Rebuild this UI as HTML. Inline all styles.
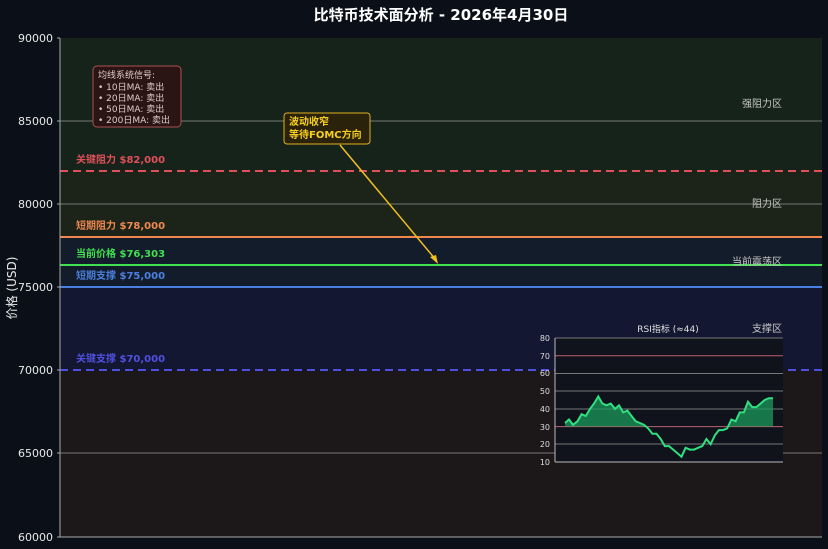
<!DOCTYPE html>
<html><head><meta charset="utf-8"><style>
html,body{margin:0;padding:0;background:#0b0f17;}
svg{display:block;font-family:"DejaVu Sans","Noto Sans CJK SC",sans-serif;}
</style></head><body>
<svg width="828" height="549" viewBox="0 0 828 549" xmlns="http://www.w3.org/2000/svg">
<rect width="828" height="549" fill="#0b0f17"/>
<text x="441" y="20" text-anchor="middle" fill="#ffffff" font-size="15" font-weight="bold">比特币技术面分析 - 2026年4月30日</text>
<rect x="60" y="38" width="762" height="133" fill="#15231a"/>
<rect x="60" y="171" width="762" height="66" fill="#1c2419"/>
<rect x="60" y="237" width="762" height="50" fill="#131c2a"/>
<rect x="60" y="287" width="762" height="83" fill="#131731"/>
<rect x="60" y="370" width="762" height="167" fill="#1c1719"/>
<g stroke="#8a8f8a" stroke-width="1" opacity="0.8">
<line x1="60" y1="121" x2="822" y2="121"/>
<line x1="60" y1="204" x2="822" y2="204"/>
<line x1="60" y1="453" x2="822" y2="453"/>
</g>
<line x1="60" y1="171" x2="822" y2="171" stroke="#e0505a" stroke-width="2" stroke-dasharray="8,5"/>
<line x1="60" y1="237" x2="822" y2="237" stroke="#f08850" stroke-width="2"/>
<line x1="60" y1="265" x2="822" y2="265" stroke="#40e050" stroke-width="2"/>
<line x1="60" y1="287" x2="822" y2="287" stroke="#4a80e0" stroke-width="2"/>
<line x1="60" y1="370" x2="822" y2="370" stroke="#5050e0" stroke-width="2" stroke-dasharray="8,5"/>
<line x1="60" y1="38" x2="60" y2="537" stroke="#aaaaaa" stroke-width="1"/>
<line x1="60" y1="537" x2="822" y2="537" stroke="#aaaaaa" stroke-width="1"/>
<g fill="#e8e8e8" font-size="11" text-anchor="end">
<text x="53" y="42">90000</text><text x="53" y="125">85000</text><text x="53" y="208">80000</text>
<text x="53" y="291">75000</text><text x="53" y="374">70000</text><text x="53" y="457">65000</text><text x="53" y="541">60000</text>
</g>
<g stroke="#aaaaaa"><line x1="57" y1="38" x2="60" y2="38"/><line x1="57" y1="121" x2="60" y2="121"/><line x1="57" y1="204" x2="60" y2="204"/><line x1="57" y1="287" x2="60" y2="287"/><line x1="57" y1="370" x2="60" y2="370"/><line x1="57" y1="453" x2="60" y2="453"/><line x1="57" y1="537" x2="60" y2="537"/></g>
<text transform="translate(16,288) rotate(-90)" text-anchor="middle" fill="#e8e8e8" font-size="12">价格 (USD)</text>
<g font-size="10" font-weight="bold">
<text x="76" y="163" fill="#e0505a">关键阻力 $82,000</text>
<text x="76" y="229" fill="#f08850">短期阻力 $78,000</text>
<text x="76" y="257" fill="#40e050">当前价格 $76,303</text>
<text x="76" y="279" fill="#4a80e0">短期支撑 $75,000</text>
<text x="76" y="362" fill="#5050e0">关键支撑 $70,000</text>
</g>
<g font-size="10" fill="#c8c8c8" text-anchor="end">
<text x="782" y="107">强阻力区</text>
<text x="782" y="207">阻力区</text>
<text x="782" y="265">当前震荡区</text>
<text x="782" y="332">支撑区</text>
</g>
<rect x="93" y="66" width="88" height="61" rx="4" fill="#2a1414" stroke="#b05050" stroke-width="1"/>
<g fill="#e0c8c8" font-size="9">
<text x="98" y="78">均线系统信号:</text>
<text x="98" y="90">• 10日MA: 卖出</text>
<text x="98" y="101">• 20日MA: 卖出</text>
<text x="98" y="112">• 50日MA: 卖出</text>
<text x="98" y="123">• 200日MA: 卖出</text>
</g>
<line x1="340" y1="145" x2="436" y2="260" stroke="#f0c020" stroke-width="1.5"/>
<polygon points="438,264 430,257 436,255" fill="#f0c020"/>
<rect x="284" y="113" width="86" height="31" rx="3" fill="#2a220a" stroke="#e0b020" stroke-width="1"/>
<g fill="#f8d020" font-size="10" font-weight="bold">
<text x="289" y="125">波动收窄</text>
<text x="289" y="138">等待FOMC方向</text>
</g>
<rect x="555" y="338" width="228" height="124" fill="#10131c"/>
<text x="668" y="332" text-anchor="middle" fill="#e0e0e0" font-size="9">RSI指标 (≈44)</text>
<g stroke="#9a9a9a" stroke-width="0.8">
<line x1="555" y1="338" x2="783" y2="338"/>
<line x1="555" y1="373.5" x2="783" y2="373.5"/>
<line x1="555" y1="391" x2="783" y2="391"/>
<line x1="555" y1="409" x2="783" y2="409"/>
<line x1="555" y1="444" x2="783" y2="444"/>
</g>
<line x1="555" y1="355.7" x2="783" y2="355.7" stroke="#c06070" stroke-width="1"/>
<line x1="555" y1="426.6" x2="783" y2="426.6" stroke="#c06070" stroke-width="1"/>
<line x1="555" y1="338" x2="555" y2="462" stroke="#bbbbbb"/>
<line x1="555" y1="462" x2="783" y2="462" stroke="#bbbbbb"/>
<g fill="#dddddd" font-size="8" text-anchor="end">
<text x="550" y="341">80</text><text x="550" y="359">70</text><text x="550" y="376">60</text><text x="550" y="394">50</text>
<text x="550" y="412">40</text><text x="550" y="430">30</text><text x="550" y="447">20</text><text x="550" y="465">10</text>
</g>
<defs><clipPath id="c"><rect x="555" y="338" width="228" height="88.6"/></clipPath></defs>
<polygon clip-path="url(#c)" fill="#1a9a5a" opacity="0.75" points="565,426.6 565,423 569,419.5 573,424.8 577.5,421.3 581.6,414.2 585.8,416 590,408.9 594,403.6 598.3,396.5 602.4,403.6 606.6,405.3 610.8,403.6 615,408.9 619,405.3 623.2,412.4 627.4,410.6 631.6,416 635.7,421.3 639.9,423 644,424.8 648.2,428.4 652.4,433.7 656.5,433.7 660.7,439 664.8,446.1 669,446.1 673.2,449.6 677.3,453.1 681.5,456.7 685.6,447.8 689.8,449.6 694,449.6 698.1,447.8 702.3,446.1 706.4,439 710.6,444.3 714.8,435.4 718.9,430.1 723,430.1 727.2,428.4 731.4,419.5 735.6,421.3 739.7,412.4 743.9,412.4 748,401.8 752.2,407.1 756.4,407.1 760.5,403.6 764.7,400 768.8,398.2 773,398.2 773,426.6"/>
<polyline fill="none" stroke="#30e080" stroke-width="2" points="565,423 569,419.5 573,424.8 577.5,421.3 581.6,414.2 585.8,416 590,408.9 594,403.6 598.3,396.5 602.4,403.6 606.6,405.3 610.8,403.6 615,408.9 619,405.3 623.2,412.4 627.4,410.6 631.6,416 635.7,421.3 639.9,423 644,424.8 648.2,428.4 652.4,433.7 656.5,433.7 660.7,439 664.8,446.1 669,446.1 673.2,449.6 677.3,453.1 681.5,456.7 685.6,447.8 689.8,449.6 694,449.6 698.1,447.8 702.3,446.1 706.4,439 710.6,444.3 714.8,435.4 718.9,430.1 723,430.1 727.2,428.4 731.4,419.5 735.6,421.3 739.7,412.4 743.9,412.4 748,401.8 752.2,407.1 756.4,407.1 760.5,403.6 764.7,400 768.8,398.2 773,398.2"/>
</svg>
</body></html>
